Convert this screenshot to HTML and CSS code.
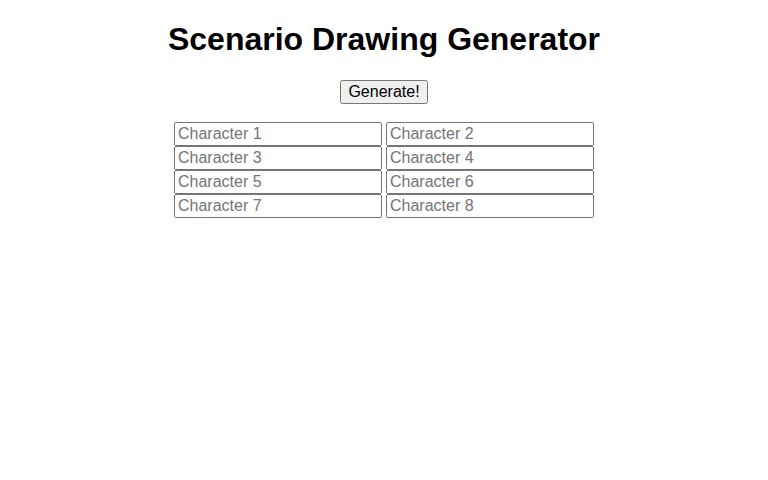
FILE: index.html
```html
<!DOCTYPE html>
<html>

<head>
    <title>Scenario Drawing Generator</title>
    <meta name="viewport" content="width=device-width, initial-scale=1">
    <link rel="stylesheet" href="styles.css">
</head>

<body>

    <h1>Scenario Drawing Generator</h1>

    <div class="controls">
        <button type="button" id="generate">Generate!</button>
    </div>

    <div class="characters">
        <input type="text" id="char1" placeholder="Character 1">
        <input type="text" id="char2" placeholder="Character 2">
        <input type="text" id="char3" placeholder="Character 3">
        <input type="text" id="char4" placeholder="Character 4">
        <input type="text" id="char5" placeholder="Character 5">
        <input type="text" id="char6" placeholder="Character 6">
        <input type="text" id="char7" placeholder="Character 7">
        <input type="text" id="char8" placeholder="Character 8">
    </div>

</body>

</html>
```

FILE: styles.css
```css
body {
    margin: 0;
    font-family: "Liberation Sans", Arial, sans-serif;
    font-size: 16px;
}

h1 {
    text-align: center;
    font-size: 32px;
    margin: 21px 0 22px;
}

.controls {
    display: flex;
    justify-content: center;
}

button {
    font-family: "Liberation Sans", Arial, sans-serif;
    font-size: 16px;
}

/* two columns of character names */
.characters {
    display: grid;
    grid-template-columns: 208px 208px;
    column-gap: 4px;
    justify-content: center;
    margin-top: 18px;
}

.characters input {
    box-sizing: border-box;
    width: 208px;
    height: 24px;
    font-family: "Liberation Sans", Arial, sans-serif;
    font-size: 16px;
    margin: 0;
}
```
